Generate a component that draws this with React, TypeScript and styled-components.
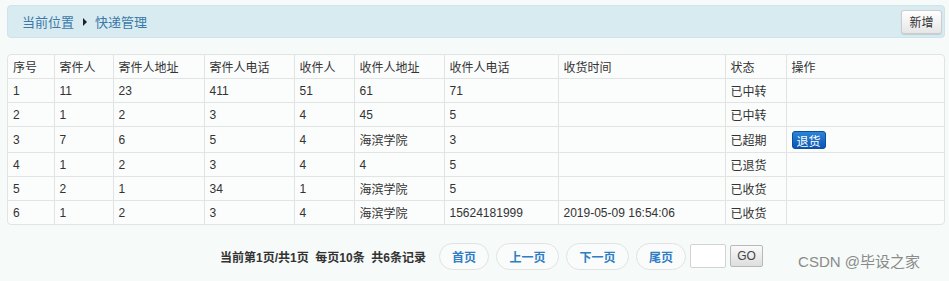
import { createGlobalStyle, styled } from 'styled-components';

const GlobalStyle = createGlobalStyle`
	html, body {
		margin: 0;
		padding: 0;
		background: #f6faf8;
	}
	body {
		font-family: "Liberation Sans", "Noto Sans CJK SC", sans-serif;
		font-size: 12px;
		color: #333;
	}
`;

interface IRecord {
	id: number;
	sender: string;
	senderAddr: string;
	senderTel: string;
	receiver: string;
	receiverAddr: string;
	receiverTel: string;
	time: string;
	status: string;
	canReturn?: boolean;
}

const columns = [
	{ title: '序号', width: 46 },
	{ title: '寄件人', width: 59 },
	{ title: '寄件人地址', width: 91 },
	{ title: '寄件人电话', width: 90 },
	{ title: '收件人', width: 60 },
	{ title: '收件人地址', width: 90 },
	{ title: '收件人电话', width: 114 },
	{ title: '收货时间', width: 167 },
	{ title: '状态', width: 61 },
	{ title: '操作', width: 158 },
];

const records: IRecord[] = [
	{ id: 1, sender: '11', senderAddr: '23', senderTel: '411', receiver: '51', receiverAddr: '61', receiverTel: '71', time: '', status: '已中转' },
	{ id: 2, sender: '1', senderAddr: '2', senderTel: '3', receiver: '4', receiverAddr: '45', receiverTel: '5', time: '', status: '已中转' },
	{ id: 3, sender: '7', senderAddr: '6', senderTel: '5', receiver: '4', receiverAddr: '海滨学院', receiverTel: '3', time: '', status: '已超期', canReturn: true },
	{ id: 4, sender: '1', senderAddr: '2', senderTel: '3', receiver: '4', receiverAddr: '4', receiverTel: '5', time: '', status: '已退货' },
	{ id: 5, sender: '2', senderAddr: '1', senderTel: '34', receiver: '1', receiverAddr: '海滨学院', receiverTel: '5', time: '', status: '已收货' },
	{ id: 6, sender: '1', senderAddr: '2', senderTel: '3', receiver: '4', receiverAddr: '海滨学院', receiverTel: '15624181999', time: '2019-05-09 16:54:06', status: '已收货' },
];

const App = () => (
	<Page>
		<GlobalStyle />
		<Breadcrumb>
			<Crumbs>
				<span>当前位置</span>
				<Arrow />
				<span>快递管理</span>
			</Crumbs>
			<AddButton>新增</AddButton>
		</Breadcrumb>

		<TableWrap>
			<Table>
				<colgroup>
					{columns.map((c) => (
						<col key={c.title} style={{ width: c.width }} />
					))}
				</colgroup>
				<thead>
					<tr>
						{columns.map((c) => (
							<th key={c.title}>{c.title}</th>
						))}
					</tr>
				</thead>
				<tbody>
					{records.map((r) => (
						<Row key={r.id} $tall={r.canReturn}>
							<td>{r.id}</td>
							<td>{r.sender}</td>
							<td>{r.senderAddr}</td>
							<td>{r.senderTel}</td>
							<td>{r.receiver}</td>
							<td>{r.receiverAddr}</td>
							<td>{r.receiverTel}</td>
							<td>{r.time}</td>
							<td>{r.status}</td>
							<td>{r.canReturn && <ReturnButton>退货</ReturnButton>}</td>
						</Row>
					))}
				</tbody>
			</Table>
		</TableWrap>

		<Pager>
			<PagerInfo>当前第1页/共1页&nbsp;&nbsp;每页10条&nbsp;&nbsp;共6条记录</PagerInfo>
			<PageButton $w={50}>首页</PageButton>
			<PageButton $w={63}>上一页</PageButton>
			<PageButton $w={63}>下一页</PageButton>
			<PageButton $w={50}>尾页</PageButton>
			<PageInput />
			<GoButton>GO</GoButton>
			<Watermark>CSDN @毕设之家</Watermark>
		</Pager>
	</Page>
);

export default App;

const Page = styled.div`
	width: 938px;
	padding: 5px 4px 0 7px;
`;

const Breadcrumb = styled.div`
	display: flex;
	align-items: center;
	justify-content: space-between;
	height: 33px;
	box-sizing: border-box;
	padding: 0 2px 0 14px;
	background: #d8ebf0;
	border: 1px solid #cfe3ea;
	border-radius: 4px;
`;

const Crumbs = styled.div`
	display: flex;
	align-items: center;
	gap: 7px;
	font-size: 13px;
	color: #3b79aa;
`;

const Arrow = styled.i`
	width: 0;
	height: 0;
	border-top: 4px solid transparent;
	border-bottom: 4px solid transparent;
	border-left: 4px solid #222;
	margin: 0 1px 0 2px;
`;

const AddButton = styled.button`
	width: 41px;
	height: 24px;
	padding: 0;
	font-family: inherit;
	font-size: 12px;
	color: #333;
	background: linear-gradient(#ffffff, #e6e6e6);
	border: 1px solid #cccccc;
	border-radius: 3px;
	box-shadow: 0 1px 1px rgba(0, 0, 0, 0.12);
`;

const TableWrap = styled.div`
	margin-top: 16px;
	background: #fbfcfc;
	border: 1px solid #e2e4e3;
	border-radius: 4px;
	overflow: hidden;
`;

const Table = styled.table`
	width: 100%;
	border-collapse: collapse;
	table-layout: fixed;
	th,
	td {
		height: 23px;
		padding: 0 5px;
		text-align: left;
		font-weight: normal;
		font-size: 12px;
		color: #333;
		border-right: 1px solid #e2e4e3;
		border-bottom: 1px solid #e2e4e3;
		white-space: nowrap;
	}
	th:last-child,
	td:last-child {
		border-right: none;
	}
	tbody tr:last-child td {
		border-bottom: none;
	}
`;

const Row = styled.tr<{ $tall?: boolean }>`
	td {
		height: ${(p) => (p.$tall ? 25 : 23)}px;
	}
`;

const ReturnButton = styled.button`
	display: block;
	width: 34px;
	height: 18px;
	padding: 0;
	font-family: inherit;
	font-size: 12px;
	color: #fff;
	background: linear-gradient(#2b85d6, #0a55b0);
	border: 1px solid #0b4f9f;
	border-radius: 3px;
`;

const Pager = styled.div`
	display: flex;
	align-items: center;
	height: 28px;
	margin-top: 17px;
	padding-left: 213px;
`;

const PagerInfo = styled.span`
	font-weight: bold;
	font-size: 12px;
	color: #333;
	margin-right: 13px;
`;

const PageButton = styled.button<{ $w: number }>`
	width: ${(p) => p.$w}px;
	height: 27px;
	margin-right: 7px;
	padding: 0;
	font-family: inherit;
	font-size: 12px;
	font-weight: bold;
	color: #2f7dc4;
	background: #fafcfb;
	border: 1px solid #e1e3e2;
	border-radius: 14px;
`;

const PageInput = styled.input`
	width: 36px;
	height: 24px;
	box-sizing: border-box;
	margin: 0 4px 0 -3px;
	border: 1px solid #d3d3d3;
	border-radius: 2px;
	background: #fff;
`;

const GoButton = styled.button`
	width: 33px;
	height: 22px;
	padding: 0;
	font-family: inherit;
	font-size: 12px;
	color: #444;
	background: linear-gradient(#fafafa, #dedede);
	border: 1px solid #b8b8b8;
	border-radius: 2px;
`;

const Watermark = styled.span`
	margin-left: 35px;
	font-size: 15px;
	color: #8a8a8a;
	padding-top: 8px;
`;
